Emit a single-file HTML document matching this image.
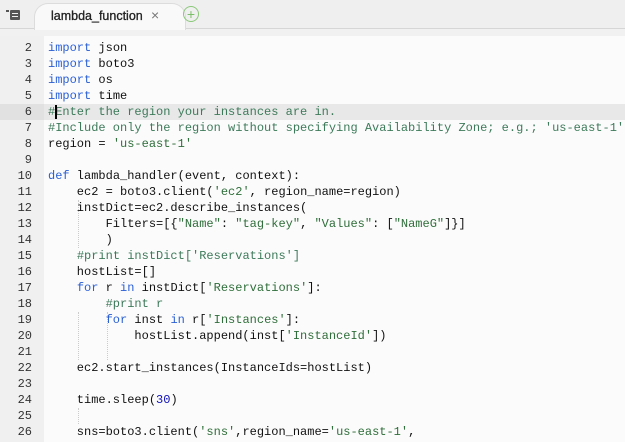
<!DOCTYPE html>
<html><head><style>
body{margin:0;width:625px;height:442px;overflow:hidden;background:#fbfbfb;font-family:"Liberation Sans",sans-serif;position:relative}
.hdr{position:absolute;left:0;top:0;width:625px;height:28px;background:#efefef;border-bottom:1px solid #d6d6d6}
.band{position:absolute;left:0;top:29px;width:625px;height:7px;background:#f1f1f1}
.tab{position:absolute;left:34px;top:3px;width:150px;height:26px;background:#f9f9f9;border-radius:14px 14px 0 0;border:1px solid #dcdcdc;border-bottom:none}
.tabt{position:absolute;left:51px;top:9px;font-size:12.5px;color:#222;-webkit-text-stroke:0.3px #222}
.x{position:absolute;left:151px;top:7px;font-size:14px;color:#777}
.plus{position:absolute;left:183px;top:6px;width:14px;height:14px;border:1.5px solid #8bc87a;border-radius:50%;color:#7bbf6a;font-size:14px;line-height:14px;text-align:center}
.gut{position:absolute;left:0;top:36px;width:44px;height:406px;background:#f0f0f0}
.hl{position:absolute;left:44px;top:104px;width:581px;height:16px;background:#e8e8e8}
.hlg{position:absolute;left:0;top:104px;width:44px;height:16px;background:#e1e1e1}
.nums{position:absolute;left:0;top:40px;width:32px;text-align:right;font-family:"Liberation Mono",monospace;font-size:12px;line-height:16px;color:#333;white-space:pre}
.code{position:absolute;left:48px;top:40px;font-family:"Liberation Mono",monospace;font-size:12px;line-height:16px;color:#111;white-space:pre}
.k{color:#2a5fd4}.c{color:#3d7a5a}.s{color:#2f6e3a}.n{color:#1010b8}
.cur{position:absolute;left:55px;top:105px;width:2px;height:14px;background:#000}
.g{position:absolute;border-left:1px dotted #ccc;width:0}
</style></head><body>
<div class="hdr"></div><div class="band"></div>
<svg style="position:absolute;left:6px;top:10px" width="14" height="10"><rect x="0" y="0" width="3" height="2" fill="#555"/><rect x="4" y="0" width="10" height="10" rx="1" fill="#555"/><rect x="6" y="3" width="6" height="1" fill="#efefef"/><rect x="6" y="6" width="6" height="1" fill="#efefef"/></svg>
<div class="tab"></div>
<div class="tabt">lambda_function</div>
<div class="x">×</div>
<div class="plus">+</div>
<div class="gut"></div><div class="hlg"></div><div class="hl"></div>
<div class="g" style="left:78px;top:200px;height:48px"></div>
<div class="g" style="left:107px;top:312px;height:48px"></div>
<div class="g" style="left:78px;top:312px;height:48px"></div>
<div class="g" style="left:78px;top:408px;height:16px"></div>
<div class="nums">2
3
4
5
6
7
8
9
10
11
12
13
14
15
16
17
18
19
20
21
22
23
24
25
26</div>
<div class="code"><span class="k">import</span> json
<span class="k">import</span> boto3
<span class="k">import</span> os
<span class="k">import</span> time
<span class="c">#Enter the region your instances are in.</span>
<span class="c">#Include only the region without specifying Availability Zone; e.g.; 'us-east-1'</span>
region = <span class="s">'us-east-1'</span>

<span class="k">def</span> lambda_handler(event, context):
    ec2 = boto3.client(<span class="s">'ec2'</span>, region_name=region)
    instDict=ec2.describe_instances(
        Filters=[{<span class="s">"Name"</span>: <span class="s">"tag-key"</span>, <span class="s">"Values"</span>: [<span class="s">"NameG"</span>]}]
        )
    <span class="c">#print instDict['Reservations']</span>
    hostList=[]
    <span class="k">for</span> r <span class="k">in</span> instDict[<span class="s">'Reservations'</span>]:
        <span class="c">#print r</span>
        <span class="k">for</span> inst <span class="k">in</span> r[<span class="s">'Instances'</span>]:
            hostList.append(inst[<span class="s">'InstanceId'</span>])

    ec2.start_instances(InstanceIds=hostList)

    time.sleep(<span class="n">30</span>)

    sns=boto3.client(<span class="s">'sns'</span>,region_name=<span class="s">'us-east-1'</span>,</div>
<div class="cur"></div>
</body></html>
